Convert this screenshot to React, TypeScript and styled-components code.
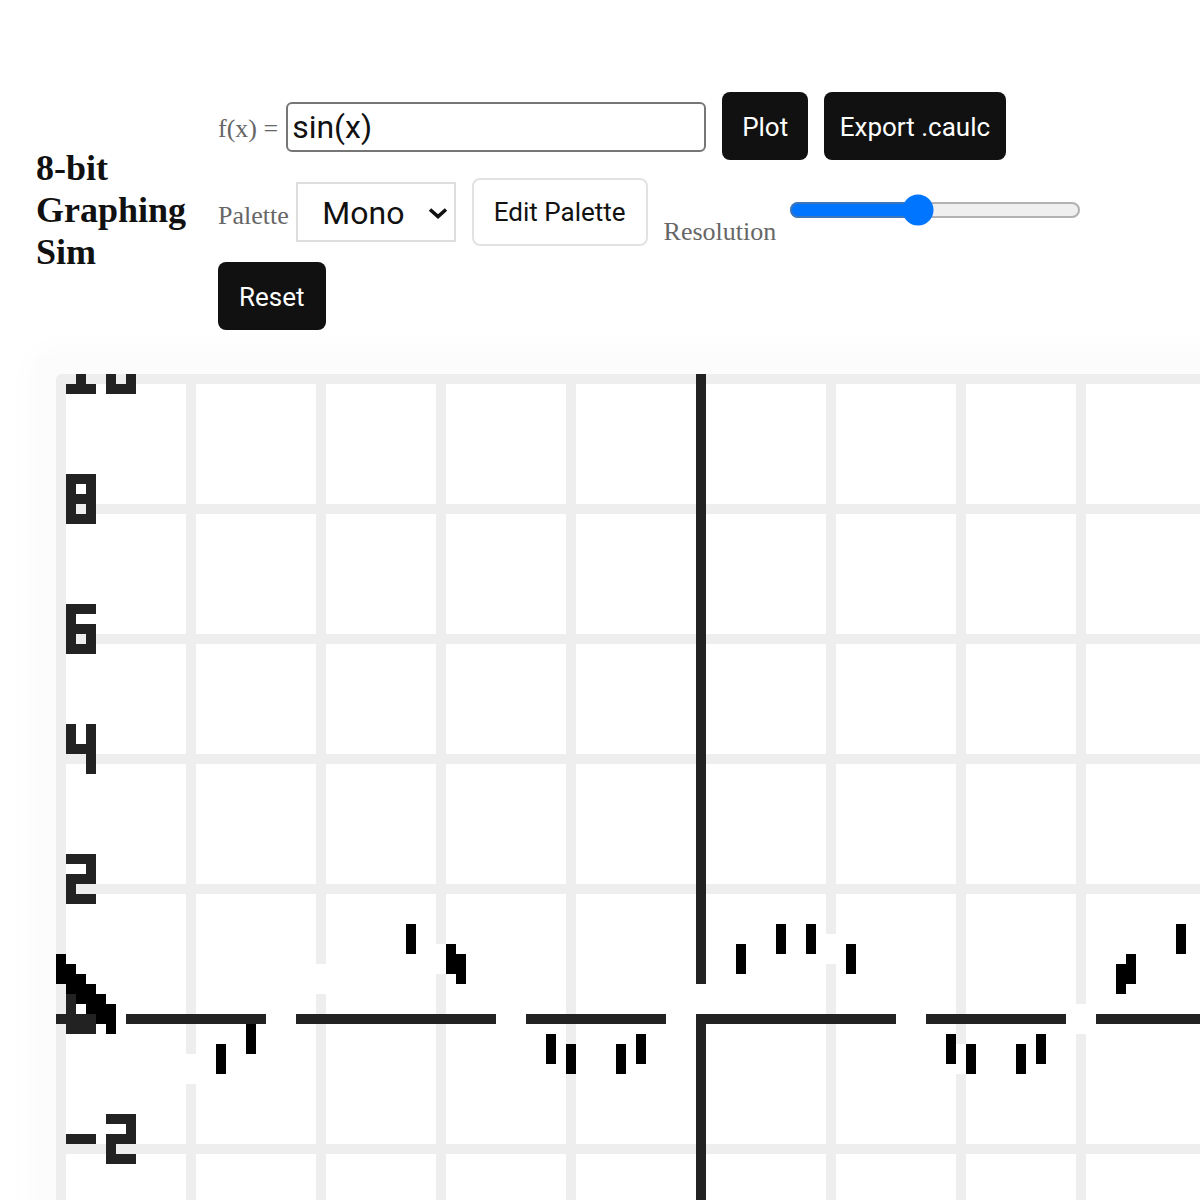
import { createGlobalStyle, styled } from 'styled-components';

const GlobalStyle = createGlobalStyle`
    html, body {
        margin: 0;
        height: 1200px;
        overflow: hidden;
        background: #fff;
    }
`;

const Page = styled.main`
    padding: 92px 36px 0;
`;

const Header = styled.header`
    display: flex;
    align-items: center;
    gap: 32px;
`;

const Title = styled.h1`
    flex: none;
    width: 150px;
    margin: 0 0 2px;
    font-family: "Liberation Serif", serif;
    font-size: 36px;
    line-height: 42px;
    font-weight: 700;
    color: #111;
`;

const Controls = styled.div`
    flex: 1;
    display: flex;
    flex-wrap: wrap;
    align-items: center;
    gap: 12px 16px;
`;

const Field = styled.div<{ $gap: number; $tall?: boolean }>`
    display: flex;
    align-items: ${(props) => (props.$tall ? 'flex-start' : 'center')};
    gap: ${(props) => props.$gap}px;
    margin-top: 2px;
    height: ${(props) => (props.$tall ? '76px' : 'auto')};
`;

const Label = styled.label<{ $drop?: number }>`
    font-family: "Liberation Serif", serif;
    font-size: 26px;
    line-height: 30px;
    color: #666;
    margin-top: ${(props) => props.$drop ?? 0}px;
`;

const FormulaInput = styled.input`
    box-sizing: border-box;
    width: 420px;
    height: 50px;
    padding: 0 5px 0 4px;
    border: 2px solid #767676;
    border-radius: 6px;
    font-family: Roboto, sans-serif;
    font-size: 32px;
    color: #111;
    outline: none;
`;

const Button = styled.button<{ $padding?: number }>`
    box-sizing: border-box;
    height: 68px;
    padding: 2px ${(props) => props.$padding ?? 20}px 0;
    border: none;
    border-radius: 8px;
    background: #111;
    color: #fff;
    font-family: Roboto, sans-serif;
    font-size: 26px;
    cursor: pointer;
`;

const OutlineButton = styled(Button)`
    margin-top: 2px;
    padding-top: 0;
    border: 2px solid #e2e2e2;
    background: #fff;
    color: #111;
`;

const SelectWrap = styled.div`
    position: relative;
    display: flex;
`;

const PaletteSelect = styled.select`
    box-sizing: border-box;
    width: 160px;
    height: 60px;
    padding: 2px 0 0 24.5px;
    appearance: none;
    border: 2px solid #ddd;
    border-radius: 0;
    background: #fff;
    font-family: Roboto, sans-serif;
    font-size: 32px;
    color: #111;
`;

const Chevron = styled.svg`
    position: absolute;
    top: 25px;
    right: 8px;
    pointer-events: none;
`;

const ResolutionSlider = styled.input`
    width: 146px;
    margin: 10px 0 0;
    zoom: 2;
    accent-color: #0075ff;
`;

const PlotCard = styled.section`
    width: max-content;
    margin-top: 24px;
    padding: 20px;
    border-radius: 12px;
    background: #fcfcfc;
    box-shadow: 0 0 36px 2px rgba(0, 0, 0, 0.022);
`;

const PlotCanvas = styled.svg`
    display: block;
    border-radius: 6px;
    background: #fff;
`;

type Cell = [number, number];

const COLS = 116;
const ROWS = 84;
const CELL = 10;

const GRID_COLS = [0, 13, 26, 38, 51, 77, 90, 102];
const GRID_ROWS = [0, 13, 26, 38, 51, 77];

const DIGITS: Record<string, string[]> = {
    '0': ['###', '#.#', '#.#', '#.#', '###'],
    '1': ['.#.', '.#.', '.#.', '.#.', '###'],
    '2': ['###', '..#', '###', '#..', '###'],
    '4': ['#.#', '#.#', '###', '..#', '..#'],
    '6': ['###', '#..', '###', '#.#', '###'],
    '8': ['###', '#.#', '###', '#.#', '###'],
    '-': ['...', '...', '###', '...', '...'],
};

// y-axis tick labels: [characters, top row]
const TICKS: [string, number][] = [
    ['10', -3],
    ['8', 10],
    ['6', 23],
    ['4', 35],
    ['2', 48],
    ['0', 61],
    ['-2', 74],
];

// top row of each three pixel tall curve segment, by column
const CURVE: Cell[] = [
    [0, 58], [1, 59], [2, 60], [3, 61], [4, 62], [5, 63],
    [16, 67], [19, 65],
    [35, 55], [39, 57], [40, 58],
    [49, 66], [51, 67], [56, 67], [58, 66],
    [68, 57], [72, 55], [75, 55], [79, 57],
    [89, 66], [91, 67], [96, 67], [98, 66],
    [106, 59], [107, 58], [112, 55],
];

// spots where the plot wiped the grid under it
const ERASED: Cell[] = [
    [13, 68], [26, 59], [38, 57], [77, 56], [90, 67], [102, 63],
];

const AXIS_SPANS: [number, number][] = [
    [0, 4], [7, 21], [24, 44], [47, 61], [64, 84], [87, 101], [104, COLS],
];

const labelCells = (): Cell[] => {
    const cells: Cell[] = [];
    TICKS.forEach(([text, top]) => {
        text.split('').forEach((ch, i) => {
            DIGITS[ch].forEach((line, y) => {
                line.split('').forEach((mark, x) => {
                    if (mark === '#') cells.push([1 + i * 4 + x, top + y]);
                });
            });
        });
    });
    return cells;
};

function Graph() {
    const width = COLS * CELL;
    const height = ROWS * CELL;

    return (
        <PlotCanvas width={width} height={height} viewBox={`0 0 ${width} ${height}`} shapeRendering="crispEdges">
            {GRID_COLS.map((c) => (
                <rect key={`gc${c}`} x={c * CELL} y={0} width={CELL} height={height} fill="#eee" />
            ))}
            {GRID_ROWS.map((r) => (
                <rect key={`gr${r}`} x={0} y={r * CELL} width={width} height={CELL} fill="#eee" />
            ))}
            {ERASED.map(([c, r]) => (
                <rect key={`e${c}`} x={c * CELL} y={r * CELL} width={CELL} height={CELL * 3} fill="#fff" />
            ))}
            <rect x={64 * CELL} y={0} width={CELL} height={61 * CELL} fill="#222" />
            <rect x={64 * CELL} y={64 * CELL} width={CELL} height={20 * CELL} fill="#222" />
            {AXIS_SPANS.map(([from, to]) => (
                <rect key={`a${from}`} x={from * CELL} y={64 * CELL} width={(to - from) * CELL} height={CELL} fill="#222" />
            ))}
            {labelCells().map(([c, r]) => (
                <rect key={`l${c}-${r}`} x={c * CELL} y={r * CELL} width={CELL} height={CELL} fill="#222" />
            ))}
            {CURVE.map(([c, r]) => (
                <rect key={`c${c}`} x={c * CELL} y={r * CELL} width={CELL} height={CELL * 3} fill="#000" />
            ))}
        </PlotCanvas>
    );
}

export default function App() {
    return (
        <Page>
            <GlobalStyle />
            <Header>
                <Title>8-bit Graphing Sim</Title>
                <Controls>
                    <Field $gap={8}>
                        <Label htmlFor="formula" $drop={4}>f(x) =</Label>
                        <FormulaInput id="formula" defaultValue="sin(x)" />
                    </Field>
                    <Button>Plot</Button>
                    <Button $padding={15.5}>Export .caulc</Button>
                    <Field $gap={7}>
                        <Label htmlFor="palette" $drop={8}>Palette</Label>
                        <SelectWrap>
                            <PaletteSelect id="palette" defaultValue="Mono">
                                <option>Mono</option>
                                <option>Amber</option>
                                <option>Green</option>
                            </PaletteSelect>
                            <Chevron width="20" height="12" viewBox="0 0 20 12">
                                <path d="M2 2.5 L10 9.5 L18 2.5" fill="none" stroke="#111" strokeWidth="3.6" />
                            </Chevron>
                        </SelectWrap>
                    </Field>
                    <OutlineButton>Edit Palette</OutlineButton>
                    <Field $gap={13} $tall>
                        <Label htmlFor="resolution" $drop={43}>Resolution</Label>
                        <ResolutionSlider id="resolution" type="range" min={0} max={100} defaultValue={43.5} step={0.5} />
                    </Field>
                    <Button $padding={21}>Reset</Button>
                </Controls>
            </Header>
            <PlotCard>
                <Graph />
            </PlotCard>
        </Page>
    );
}
